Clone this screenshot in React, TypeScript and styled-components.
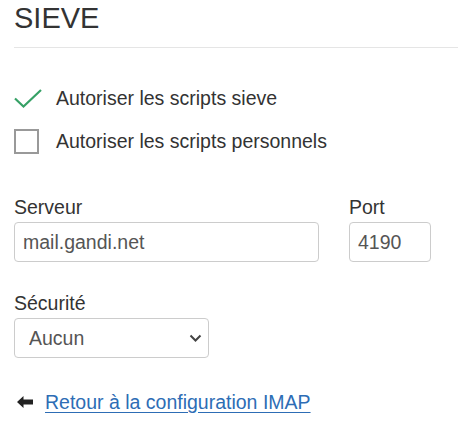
import styled, { createGlobalStyle } from "styled-components";

const GlobalStyle = createGlobalStyle`
  body {
    margin: 0;
    background: #ffffff;
    font-family: "Liberation Sans", Arial, Helvetica, sans-serif;
    color: #333333;
  }
`;

const Page = styled.div`
  width: 458px;
  padding-left: 14px;
  box-sizing: border-box;
`;

const Title = styled.h3`
  margin: 0 0 38px;
  height: 36px;
  padding-bottom: 11px;
  font-size: 29px;
  font-weight: 400;
  line-height: 36px;
  color: #333333;
  border-bottom: 1px solid #e5e5e5;
`;

const OptionList = styled.div`
  display: flex;
  flex-direction: column;
  gap: 19px;
  margin-bottom: 42px;
`;

const OptionRow = styled.label`
  display: flex;
  align-items: center;
  height: 24px;
  font-size: 19.5px;
  line-height: 24px;
  color: #333333;
  cursor: pointer;
`;

const Toggle = styled.span`
  width: 42px;
  flex: none;
  display: flex;
  align-items: center;
`;

const EmptyBox = styled.span`
  width: 25px;
  height: 25px;
  box-sizing: border-box;
  border: 2px solid #999999;
`;

const FieldRow = styled.div`
  display: flex;
  gap: 30px;
  margin-bottom: 29px;
`;

const Field = styled.div<{ $width: number }>`
  width: ${(p) => p.$width}px;
  display: flex;
  flex-direction: column;
`;

const Label = styled.span`
  font-size: 19.5px;
  line-height: 24px;
  margin-bottom: 3px;
  color: #333333;
`;

const TextInput = styled.input`
  height: 40px;
  box-sizing: border-box;
  width: 100%;
  padding: 0 8px;
  border: 1px solid #cccccc;
  border-radius: 4px;
  font-family: inherit;
  font-size: 19.5px;
  color: #555555;
  background: #ffffff;
  outline: none;
`;

const SelectWrap = styled.div`
  position: relative;
  width: 195px;
`;

const Select = styled.select`
  appearance: none;
  width: 100%;
  height: 40px;
  box-sizing: border-box;
  padding: 0 30px 0 14px;
  border: 1px solid #cccccc;
  border-radius: 4px;
  font-family: inherit;
  font-size: 19.5px;
  color: #555555;
  background: #ffffff;
  outline: none;
`;

const Chevron = styled.svg`
  position: absolute;
  right: 7px;
  top: 16px;
  pointer-events: none;
`;

const BackLink = styled.div`
  display: flex;
  align-items: center;
  height: 24px;
  margin-top: 32px;
  padding-left: 3px;
  gap: 12px;
`;

const LinkText = styled.a`
  font-size: 19.5px;
  line-height: 24px;
  color: #2d6db5;
  text-decoration: underline;
  text-underline-offset: 3px;
  cursor: pointer;
`;

function CheckIcon() {
  return (
    <svg width="28" height="19" viewBox="0 0 28 19">
      <polyline
        points="1,9.5 9.5,17.5 27,1"
        fill="none"
        stroke="#36a166"
        strokeWidth="2.2"
      />
    </svg>
  );
}

function Option({ checked, text }: { checked: boolean; text: string }) {
  return (
    <OptionRow>
      <Toggle>{checked ? <CheckIcon /> : <EmptyBox />}</Toggle>
      {text}
    </OptionRow>
  );
}

export default function App() {
  return (
    <>
      <GlobalStyle />
      <Page>
        <Title>SIEVE</Title>
        <OptionList>
          <Option checked text="Autoriser les scripts sieve" />
          <Option checked={false} text="Autoriser les scripts personnels" />
        </OptionList>
        <FieldRow>
          <Field $width={305}>
            <Label>Serveur</Label>
            <TextInput defaultValue="mail.gandi.net" />
          </Field>
          <Field $width={82}>
            <Label>Port</Label>
            <TextInput defaultValue="4190" />
          </Field>
        </FieldRow>
        <Field $width={195}>
          <Label>Sécurité</Label>
          <SelectWrap>
            <Select defaultValue="none">
              <option value="none">Aucun</option>
              <option value="ssl">SSL</option>
              <option value="tls">TLS</option>
            </Select>
            <Chevron width="13" height="9" viewBox="0 0 13 9">
              <polyline
                points="1.5,1.5 6.5,6.5 11.5,1.5"
                fill="none"
                stroke="#444444"
                strokeWidth="2"
              />
            </Chevron>
          </SelectWrap>
        </Field>
        <BackLink>
          <svg width="16" height="12" viewBox="0 0 16 12">
            <path d="M0 6 L6.5 0 V3.5 H16 V8.5 H6.5 V12 Z" fill="#222222" />
          </svg>
          <LinkText>Retour à la configuration IMAP</LinkText>
        </BackLink>
      </Page>
    </>
  );
}
